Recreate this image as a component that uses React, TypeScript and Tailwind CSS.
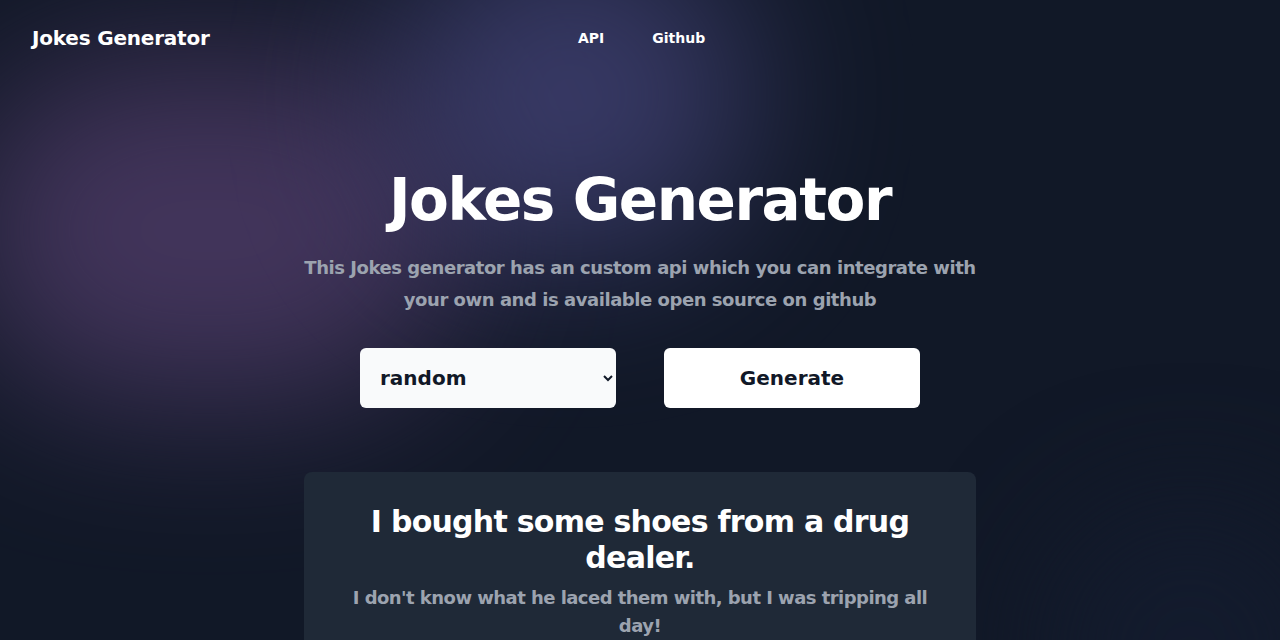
import React from 'react';

export default function App() {
  return (
    <div
      className="relative min-h-[640px] w-full overflow-hidden bg-[#111827] text-white"
      style={{ fontFamily: '"DejaVu Sans", "Noto Sans", sans-serif' }}
    >
      {/* Background glow blobs */}
      <div className="pointer-events-none absolute left-[-40px] top-[60px] h-[340px] w-[500px] rounded-full bg-[#64487e] opacity-60 blur-[80px]" />
      <div className="pointer-events-none absolute left-[390px] top-[-70px] h-[330px] w-[360px] rounded-full bg-[#52508f] opacity-60 blur-[80px]" />
      <div className="pointer-events-none absolute left-[1040px] top-[500px] h-[300px] w-[300px] rounded-full bg-[#131b2d] blur-[60px]" />

      <div className="relative">
        {/* Header */}
        <header className="flex h-[76px] items-center px-8">
          <div className="w-[520px] text-xl font-bold tracking-[-0.01em]">Jokes Generator</div>
          <nav className="flex gap-12 pl-[26px] text-sm font-bold">
            <a href="#">API</a>
            <a href="#">Github</a>
          </nav>
        </header>

        {/* Hero */}
        <main className="flex flex-col items-center pt-[94px]">
          <h1 className="text-[58px] font-bold leading-[60px] tracking-tight">Jokes Generator</h1>
          <p className="mt-[22px] max-w-[700px] text-center text-lg font-bold leading-8 tracking-[-0.025em] text-[#9ca3af]">
            This Jokes generator has an custom api which you can integrate with your own and is
            available open source on github
          </p>

          <div className="mt-[32px] flex gap-12">
            <select className="h-[60px] w-64 rounded-md bg-[#f9fafb] px-4 text-xl font-bold text-[#111827]">
              <option>random</option>
            </select>
            <button className="h-[60px] w-64 rounded-md bg-white text-xl font-bold text-[#111827]">
              Generate
            </button>
          </div>

          <div className="mt-[64px] w-[672px] rounded-lg bg-[#1f2937] px-8 pt-[32px] pb-8 text-center">
            <h2 className="text-3xl font-bold leading-9 tracking-tight">
              I bought some shoes from a drug dealer.
            </h2>
            <p className="mt-[8px] text-lg font-bold leading-7 tracking-[-0.03em] text-[#9ca3af]">
              I don't know what he laced them with, but I was tripping all day!
            </p>
          </div>
        </main>
      </div>
    </div>
  );
}
